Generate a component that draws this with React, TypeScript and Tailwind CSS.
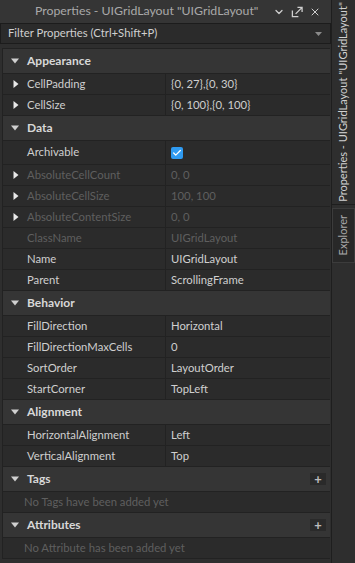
import { Check, ChevronDown, X } from "lucide-react";

type Row = {
  name: string;
  value?: string;
  expand?: boolean;
  disabled?: boolean;
  check?: boolean;
};

type Section = {
  title: string;
  rows?: Row[];
  empty?: string;
  plus?: boolean;
};

const sections: Section[] = [
  {
    title: "Appearance",
    rows: [
      { name: "CellPadding", value: "{0, 27},{0, 30}", expand: true },
      { name: "CellSize", value: "{0, 100},{0, 100}", expand: true },
    ],
  },
  {
    title: "Data",
    rows: [
      { name: "Archivable", check: true },
      { name: "AbsoluteCellCount", value: "0, 0", expand: true, disabled: true },
      { name: "AbsoluteCellSize", value: "100, 100", expand: true, disabled: true },
      { name: "AbsoluteContentSize", value: "0, 0", expand: true, disabled: true },
      { name: "ClassName", value: "UIGridLayout", disabled: true },
      { name: "Name", value: "UIGridLayout" },
      { name: "Parent", value: "ScrollingFrame" },
    ],
  },
  {
    title: "Behavior",
    rows: [
      { name: "FillDirection", value: "Horizontal" },
      { name: "FillDirectionMaxCells", value: "0" },
      { name: "SortOrder", value: "LayoutOrder" },
      { name: "StartCorner", value: "TopLeft" },
    ],
  },
  {
    title: "Alignment",
    rows: [
      { name: "HorizontalAlignment", value: "Left" },
      { name: "VerticalAlignment", value: "Top" },
    ],
  },
  { title: "Tags", empty: "No Tags have been added yet", plus: true },
  { title: "Attributes", empty: "No Attribute has been added yet", plus: true },
];

function Arrow({ down }: { down?: boolean }) {
  if (down) {
    return (
      <svg width="8" height="6" viewBox="0 0 8 6" className="text-[#d0d0d0]">
        <path d="M0 0.5h8L4 5.5z" fill="currentColor" />
      </svg>
    );
  }
  return (
    <svg width="6" height="8" viewBox="0 0 6 8" className="text-[#e8e8e8]">
      <path d="M0.5 0v8L5.5 4z" fill="currentColor" />
    </svg>
  );
}

function PropRow({ row }: { row: Row }) {
  const text = row.disabled ? "text-[#5f5f5f]" : "text-[#cfcfcf]";
  return (
    <div
      className={`flex border-b border-[#222222] bg-[#2b2b2b] ${
        row.check ? "h-[24px]" : "h-[21px]"
      }`}
    >
      <div className="flex w-[163px] items-center border-r border-[#222222]">
        <div className="flex w-[24px] justify-center pl-[1px]">
          {row.expand && <Arrow />}
        </div>
        <span className={text}>{row.name}</span>
      </div>
      <div className="flex flex-1 items-center pl-[5px]">
        {row.check ? (
          <div className="flex h-[12px] w-[12px] items-center justify-center rounded-[2px] bg-[#2f9bf2]">
            <Check size={10} strokeWidth={3} className="text-white" />
          </div>
        ) : (
          <span className={text}>{row.value}</span>
        )}
      </div>
    </div>
  );
}

function SectionBlock({ section }: { section: Section }) {
  return (
    <div>
      <div className="flex h-[25px] items-center border-b border-[#222222] bg-[#353535]">
        <div className="flex w-[24px] justify-center">
          <Arrow down />
        </div>
        <span className="text-[12px] font-bold text-[#d8d8d8]">{section.title}</span>
        {section.plus && (
          <div className="ml-auto mr-[4px] flex h-[12px] w-[16px] items-center justify-center bg-[#2a2a2a] text-[13px] font-bold leading-none text-[#bdbdbd]">
            +
          </div>
        )}
      </div>
      {section.rows?.map((row) => (
        <PropRow key={row.name} row={row} />
      ))}
      {section.empty && (
        <div className="flex h-[21px] items-center border-b border-[#222222] bg-[#2b2b2b] pl-[21px] text-[#5f5f5f]">
          {section.empty}
        </div>
      )}
    </div>
  );
}

export default function App() {
  return (
    <div className="flex h-[563px] w-[355px] overflow-hidden whitespace-nowrap bg-[#2e2e2e] font-['Lato',sans-serif] text-[11.3px]">
      <div className="flex w-[332px] flex-col border-r border-[#1e1e1e]">
        <div className="flex h-[23px] items-center bg-[#353535]">
          <span className="ml-[35px] text-[12.3px] text-[#a9a9a9]">
            Properties - UIGridLayout "UIGridLayout"
          </span>
          <div className="ml-auto flex items-center gap-[6px] pr-[10px] text-[#cfcfcf]">
            <ChevronDown size={12} strokeWidth={2.5} />
            <svg width="12" height="12" viewBox="0 0 13 13" fill="none" stroke="currentColor" strokeWidth="1.4">
              <path d="M1.5 5v6.5H8" />
              <path d="M5 8.5L11.5 2M7 1.5h5v5" />
            </svg>
            <X size={12} strokeWidth={2} />
          </div>
        </div>

        <div className="flex h-[21px] items-center border border-[#1c1c1c] bg-[#2b2b2b] pl-[7px] pr-[8px] text-[#cfcfcf]">
          <span>Filter Properties (Ctrl+Shift+P)</span>
          <svg width="7" height="4" viewBox="0 0 7 4" className="ml-auto text-[#8a8a8a]">
            <path d="M0 0h7L3.5 4z" fill="currentColor" />
          </svg>
        </div>

        <div className="mt-[4px] ml-[2px] mr-[1px] border-l border-t border-[#222222]">
          {sections.map((s) => (
            <SectionBlock key={s.title} section={s} />
          ))}
        </div>
      </div>

      <div className="flex flex-1 flex-col">
        <div className="flex h-[205px] items-center justify-center border-b border-[#1e1e1e] bg-[#2e2e2e]">
          <span className="rotate-180 text-[11px] text-[#d0d0d0] [writing-mode:vertical-rl]">
            Properties - UIGridLayout "UIGridLayout"
          </span>
        </div>
        <div className="mt-[3px] flex h-[55px] items-center justify-center border border-[#3c3c3c] bg-[#282828]">
          <span className="rotate-180 text-[11px] text-[#a9a9a9] [writing-mode:vertical-rl]">
            Explorer
          </span>
        </div>
      </div>
    </div>
  );
}
